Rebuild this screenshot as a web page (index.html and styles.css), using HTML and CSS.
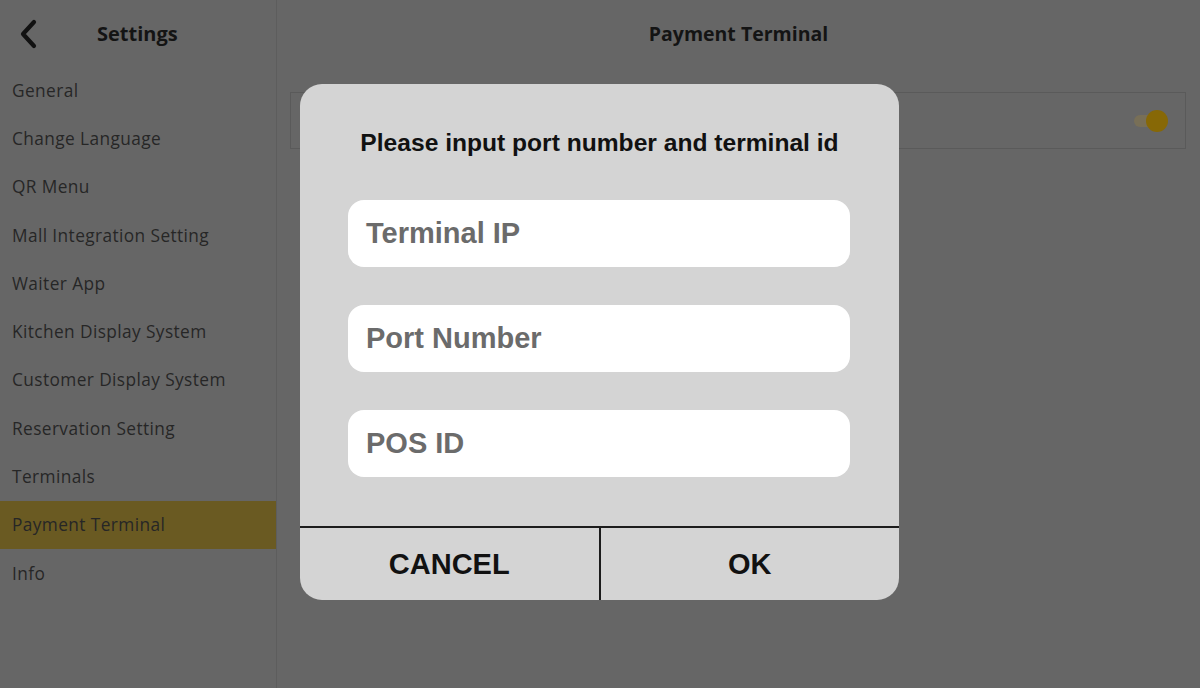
FILE: index.html
```html
<!DOCTYPE html>
<html>
<head>
<meta charset="utf-8">
<link rel="stylesheet" href="styles.css">
</head>
<body>
<div class="app">
  <aside class="sidebar">
    <div class="side-head">
      <svg class="back" width="24" height="32" viewBox="0 0 24 32"><path d="M17 4 L6 16 L17 28" fill="none" stroke="#111" stroke-width="4.2" stroke-linecap="round" stroke-linejoin="round"/></svg>
      <span class="side-title">Settings</span>
    </div>
    <ul class="menu">
      <li>General</li>
      <li>Change Language</li>
      <li>QR Menu</li>
      <li>Mall Integration Setting</li>
      <li>Waiter App</li>
      <li>Kitchen Display System</li>
      <li>Customer Display System</li>
      <li>Reservation Setting</li>
      <li>Terminals</li>
      <li class="active">Payment Terminal</li>
      <li>Info</li>
    </ul>
  </aside>
  <main class="content">
    <div class="content-head">Payment Terminal</div>
    <div class="card">
      <div class="toggle"><span class="track"></span><span class="knob"></span></div>
    </div>
  </main>
  <div class="modal">
    <div class="modal-title">Please input port number and terminal id</div>
    <div class="fields">
      <div class="field">Terminal IP</div>
      <div class="field">Port Number</div>
      <div class="field">POS ID</div>
    </div>
    <div class="actions">
      <div class="btn">CANCEL</div>
      <div class="btn">OK</div>
    </div>
  </div>
</div>
</body>
</html>
```
FILE: styles.css
```css
* { box-sizing: border-box; margin: 0; padding: 0; }
html, body { width: 1200px; height: 688px; overflow: hidden; }
body { background: #666666; font-family: "Open Sans", sans-serif; }
.app { position: relative; display: flex; width: 1200px; height: 688px; }
.sidebar { width: 277px; flex: none; border-right: 1px solid #5d5d5d; }
.side-head { height: 66px; display: flex; align-items: center; padding-left: 17px; }
.back { display: block; margin-top: 1px; }
.side-title { margin-left: 56px; font-weight: 700; font-size: 20px; color: #141414; }
.menu { list-style: none; }
.menu li { height: 48.3px; display: flex; align-items: center; padding-left: 12px; font-size: 17.3px; color: #262626; letter-spacing: 0.4px; }
.menu li.active { background: #6a5a22; }
.content { flex: 1; display: flex; flex-direction: column; }
.content-head { height: 66px; display: flex; align-items: center; justify-content: center; font-weight: 700; font-size: 19.5px; color: #141414; }
.card { margin: 26px 14px 0 13px; height: 57px; border: 1px solid #5a5a5a; display: flex; align-items: center; justify-content: flex-end; padding-right: 17px; }
.toggle { position: relative; width: 34px; height: 22px; }
.track { position: absolute; left: 0; top: 5px; width: 26px; height: 12px; border-radius: 6px; background: #786f57; }
.knob { position: absolute; right: 0; top: 0; width: 22px; height: 22px; border-radius: 50%; background: #876806; }
.modal { position: absolute; left: 300px; top: 84px; width: 599px; height: 516px; background: #d4d4d4; border-radius: 22px; display: flex; flex-direction: column; overflow: hidden; font-family: "Liberation Sans", Arial, sans-serif; }
.modal-title { margin-top: 45px; height: 28px; line-height: 28px; text-align: center; font-weight: 700; font-size: 24.6px; color: #111; }
.fields { display: flex; flex-direction: column; gap: 38px; margin: 43px 49px 0 48px; }
.field { height: 67px; background: #fff; border-radius: 16px; display: flex; align-items: center; padding-left: 18px; font-weight: 700; font-size: 29px; color: #6b6b6b; }
.actions { margin-top: auto; height: 74px; border-top: 2px solid #1c1c1c; display: flex; }
.btn { flex: 1; display: flex; align-items: center; justify-content: center; font-weight: 700; font-size: 29px; color: #111; }
.btn + .btn { border-left: 2px solid #1c1c1c; }
```
